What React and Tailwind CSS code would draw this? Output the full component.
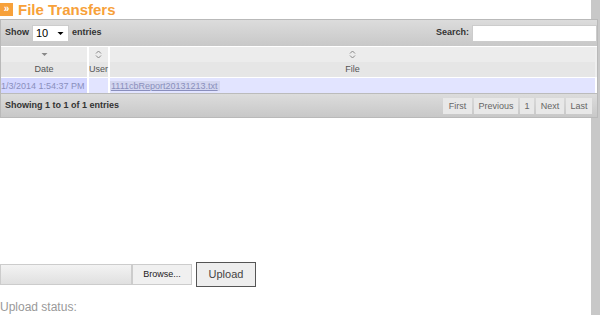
import React from "react";

function SortBoth() {
  return (
    <svg width="7" height="9" viewBox="0 0 7 9" className="block">
      <path d="M1 3.5 L3.5 1 L6 3.5" fill="none" stroke="#888" strokeWidth="1" />
      <path d="M1 5.5 L3.5 8 L6 5.5" fill="none" stroke="#888" strokeWidth="1" />
    </svg>
  );
}
function SortDesc({ color = "#888" }) {
  return (
    <svg width="7" height="5" viewBox="0 0 7 5" className="block">
      <path d="M0.5 1 L6.5 1 L3.5 4 Z" fill={color} />
    </svg>
  );
}

export default function App() {
  const font = { fontFamily: '"Liberation Sans", Arial, sans-serif' };
  return (
    <div className="relative w-[600px] h-[315px] bg-white overflow-hidden" style={font}>
      <div className="absolute right-0 top-0 w-[9px] h-[315px] bg-[#c8c8c8]" />
      <div className="relative">
        <div className="flex items-center h-[19px] gap-[5px]">
          <div className="w-[13px] h-[13px] bg-[#f7a13a] text-white text-[10px] leading-[12px] text-center font-bold">»</div>
          <div className="text-[15px] font-bold text-[#f7a13a] leading-[17px]">File Transfers</div>
        </div>
        <div className="w-[598px] border border-[#b9b9b9] bg-[#efefef]">
          <div className="flex items-center justify-between h-[26px] pl-[4px] pr-[0px] bg-gradient-to-b from-[#dcdcdc] to-[#c8c8c8] text-[9px] font-bold text-[#333]">
            <div className="flex items-center gap-[3px]">
              <span>Show</span>
              <div className="flex items-center justify-between w-[37px] h-[17px] bg-white border border-[#ccc] pl-[3px] pr-[4px] text-[11px] font-normal text-black">
                <span>10</span>
                <SortDesc color="#000" />
              </div>
              <span>entries</span>
            </div>
            <div className="flex items-center gap-[3px]">
              <span>Search:</span>
              <div className="w-[125px] h-[17px] bg-white border border-[#ccc]" />
            </div>
          </div>
          <div className="flex h-[31px] text-[9px] text-[#555] border-t border-white">
            <div className="w-[88px] bg-[#ececec] border-r-2 border-white flex flex-col items-center">
              <div className="h-[15px] flex items-center"><SortDesc /></div>
              <div className="w-full h-[15px] bg-[#e6e6e6] text-center leading-[15px]">Date</div>
            </div>
            <div className="w-[21px] bg-[#ececec] border-r-2 border-white flex flex-col items-center">
              <div className="h-[15px] flex items-center"><SortBoth /></div>
              <div className="w-full h-[15px] bg-[#e6e6e6] text-center leading-[15px]">User</div>
            </div>
            <div className="flex-1 bg-[#ececec] flex flex-col items-center mr-[2px]">
              <div className="h-[15px] flex items-center"><SortBoth /></div>
              <div className="w-full h-[15px] bg-[#e6e6e6] text-center leading-[15px]">File</div>
            </div>
          </div>
          <div className="flex h-[16px] text-[9px] border-t border-white bg-white">
            <div className="w-[88px] bg-[#d3d6ff] border-r-2 border-white text-[#8a8fbd] leading-[16px] whitespace-nowrap">1/3/2014 1:54:37 PM</div>
            <div className="w-[21px] bg-[#e2e4ff] border-r-2 border-white" />
            <div className="flex-1 bg-[#e2e4ff] mr-[2px] leading-[16px]">
              <span className="underline text-[#8a8fbd] bg-[#d3d6ef] pl-[1px] pr-[2px]">1111cbReport20131213.txt</span>
            </div>
          </div>
          <div className="flex items-center justify-between h-[24px] pl-[4px] pr-[5px] bg-gradient-to-b from-[#dcdcdc] to-[#c8c8c8] text-[9px] text-[#333] border-t border-[#bbb]">
            <span className="font-bold">Showing 1 to 1 of 1 entries</span>
            <div className="flex gap-[2px] text-[#666]">
              <span className="bg-[#e8e8e8] w-[29px] text-center leading-[16px]">First</span>
              <span className="bg-[#e8e8e8] w-[44px] text-center leading-[16px]">Previous</span>
              <span className="bg-[#e8e8e8] w-[14px] text-center leading-[16px]">1</span>
              <span className="bg-[#e8e8e8] w-[28px] text-center leading-[16px]">Next</span>
              <span className="bg-[#e8e8e8] w-[26px] text-center leading-[16px]">Last</span>
            </div>
          </div>
        </div>
        <div className="h-[144px]" />
        <div className="flex items-center">
          <div className="w-[132px] h-[21px] border border-[#ccc] bg-gradient-to-b from-[#f3f3f3] to-[#e0e0e0]" />
          <div className="w-[60px] h-[21px] border border-[#ccc] bg-[#f0f0f0] text-[9px] text-[#222] flex items-center justify-center">Browse...</div>
          <div className="ml-[4px] w-[60px] h-[25px] border border-[#555] bg-[#eee] text-[11px] text-[#444] flex items-center justify-center">Upload</div>
        </div>
        <div className="mt-[14px] text-[12px] text-[#999] leading-[13px]">Upload status:</div>
      </div>
    </div>
  );
}
